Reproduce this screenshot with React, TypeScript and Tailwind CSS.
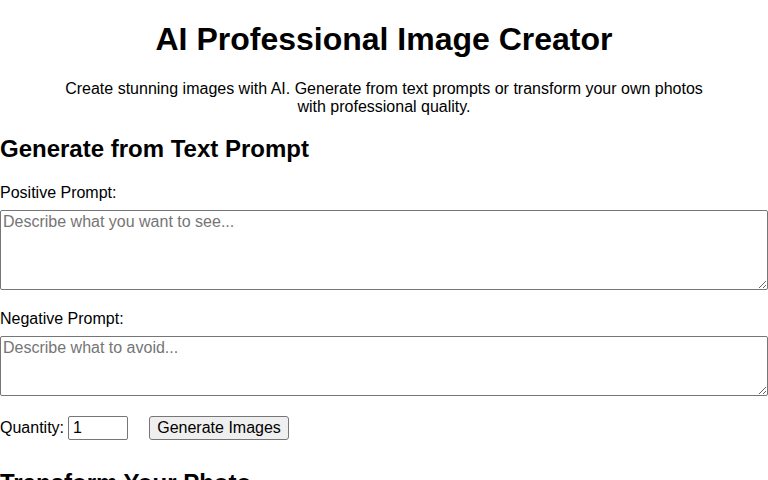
import { useState } from "react";

export default function App() {
  const [positivePrompt, setPositivePrompt] = useState("");
  const [negativePrompt, setNegativePrompt] = useState("");
  const [quantity, setQuantity] = useState("1");

  return (
    <div className="bg-white text-black font-['Liberation_Sans',Arial,sans-serif] text-base">
      <h1 className="pt-[21px] text-center text-[32px] font-bold leading-[37px]">
        AI Professional Image Creator
      </h1>
      <p className="mx-auto mt-[22px] max-w-[650px] text-center leading-[18px]">
        Create stunning images with AI. Generate from text prompts or transform
        your own photos with professional quality.
      </p>

      <section>
        <h2 className="mt-[19px] text-2xl font-bold leading-[28px]">
          Generate from Text Prompt
        </h2>

        <label htmlFor="positive" className="mt-[21px] block leading-[18px]">
          Positive Prompt:
        </label>
        <textarea
          id="positive"
          value={positivePrompt}
          onChange={(event) => setPositivePrompt(event.target.value)}
          placeholder="Describe what you want to see..."
          className="mt-[8px] block h-[80px] w-full rounded-[2px] border border-[#767676] p-[2px] leading-[18px] placeholder:text-[#757575]"
        />

        <label htmlFor="negative" className="mt-[20px] block leading-[18px]">
          Negative Prompt:
        </label>
        <textarea
          id="negative"
          value={negativePrompt}
          onChange={(event) => setNegativePrompt(event.target.value)}
          placeholder="Describe what to avoid..."
          className="mt-[8px] block h-[60px] w-full rounded-[2px] border border-[#767676] p-[2px] leading-[18px] placeholder:text-[#757575]"
        />

        <div className="mt-[20px] flex h-[24px] items-center">
          <label htmlFor="quantity" className="leading-[18px]">
            Quantity:
          </label>
          <input
            id="quantity"
            type="text"
            value={quantity}
            onChange={(event) => setQuantity(event.target.value)}
            className="ml-[4px] h-[24px] w-[60px] rounded-[2px] border border-[#767676] px-[4px] leading-[18px]"
          />
          <button
            type="button"
            className="ml-[21px] h-[24px] w-[140px] rounded-[3px] border border-[#767676] bg-[#efefef] leading-[18px]"
          >
            Generate Images
          </button>
        </div>
      </section>

      <section>
        <h2 className="mt-[29px] text-2xl font-bold leading-[28px]">
          Transform Your Photo
        </h2>
      </section>
    </div>
  );
}
